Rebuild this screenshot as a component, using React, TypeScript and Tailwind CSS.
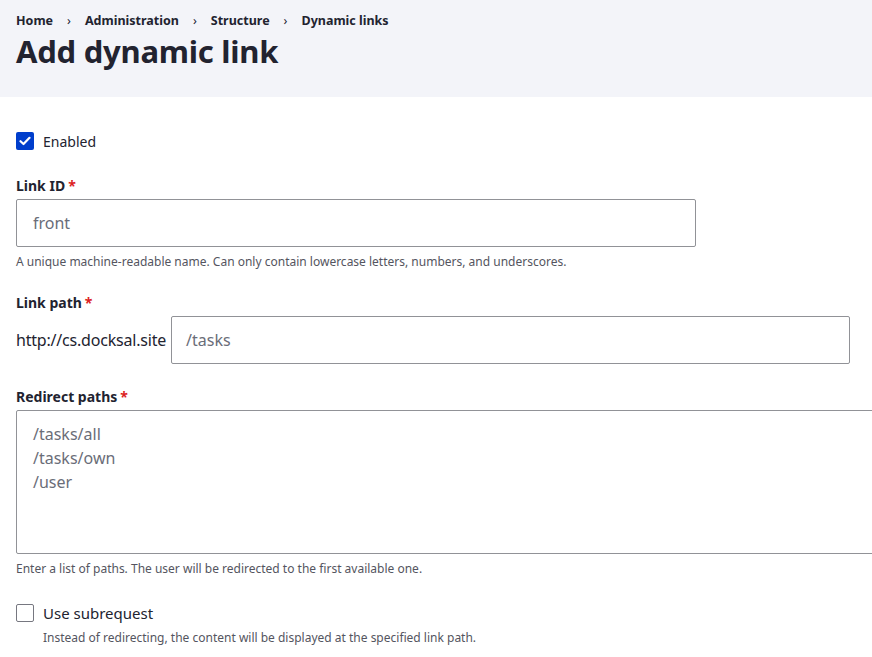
import React from "react";

const font = { fontFamily: '"Noto Sans", "Open Sans", sans-serif' };

function Req() {
  return <span className="ml-[3px] text-[#dc2323]">*</span>;
}

export default function App() {
  return (
    <div className="w-[872px] h-[657px] overflow-hidden bg-white text-[#222330]" style={font}>
      <div className="h-[97px] bg-[#f3f4f9] px-4 pt-[12px]">
        <nav className="flex items-center text-[12.5px] font-bold leading-[18px] text-[#222330]">
          <span>Home</span>
          <span className="mx-[14px] font-normal">›</span>
          <span>Administration</span>
          <span className="mx-[14px] font-normal">›</span>
          <span>Structure</span>
          <span className="mx-[14px] font-normal">›</span>
          <span>Dynamic links</span>
        </nav>
        <h1 className="mt-[1px] text-[31px] font-bold leading-[40px] tracking-[-0.25px]">Add dynamic link</h1>
      </div>

      <div className="px-4 pt-[35px]">
        <label className="flex items-center gap-[9px] h-[18px]">
          <span className="flex h-[18px] w-[18px] items-center justify-center rounded-[2px] bg-[#003ecc]">
            <svg width="12" height="10" viewBox="0 0 12 10" fill="none">
              <path d="M1.5 5.2 L4.5 8 L10.5 1.8" stroke="white" strokeWidth="2.2" strokeLinecap="round" strokeLinejoin="round" />
            </svg>
          </span>
          <span className="text-[14px]">Enabled</span>
        </label>

        <div className="mt-[27px] text-[14px] font-bold leading-[18px]">
          Link ID<Req />
        </div>
        <div className="mt-[4px] flex h-[48px] w-[680px] items-center rounded-[2px] border border-[#919297] px-4 text-[16px] text-[#6a6d78]">
          front
        </div>
        <div className="mt-[6px] text-[12px] leading-[18px] text-[#545560]">
          A unique machine-readable name. Can only contain lowercase letters, numbers, and underscores.
        </div>

        <div className="mt-[23px] text-[14px] font-bold leading-[18px]">
          Link path<Req />
        </div>
        <div className="mt-[4px] flex items-center gap-[5px]">
          <span className="text-[16px] tracking-[-0.2px]">http://cs.docksal.site</span>
          <div className="flex h-[48px] w-[679px] items-center rounded-[2px] border border-[#919297] px-[14px] text-[16px] text-[#6a6d78]">
            /tasks
          </div>
        </div>

        <div className="mt-[24px] text-[14px] font-bold leading-[18px]">
          Redirect paths<Req />
        </div>
        <div className="mt-[4px] h-[144px] w-[900px] rounded-[2px] border border-[#919297] px-4 pt-[11px] text-[16px] leading-[24px] text-[#6a6d78]">
          <div>/tasks/all</div>
          <div>/tasks/own</div>
          <div>/user</div>
        </div>
        <div className="mt-[6px] text-[12px] leading-[18px] text-[#545560]">
          Enter a list of paths. The user will be redirected to the first available one.
        </div>

        <label className="mt-[26px] flex items-center gap-[9px] h-[18px]">
          <span className="h-[18px] w-[18px] rounded-[2px] border border-[#767780] bg-white" />
          <span className="text-[15px]">Use subrequest</span>
        </label>
        <div className="mt-[7px] pl-[27px] text-[12px] leading-[18px] text-[#545560]">
          Instead of redirecting, the content will be displayed at the specified link path.
        </div>
      </div>
    </div>
  );
}
